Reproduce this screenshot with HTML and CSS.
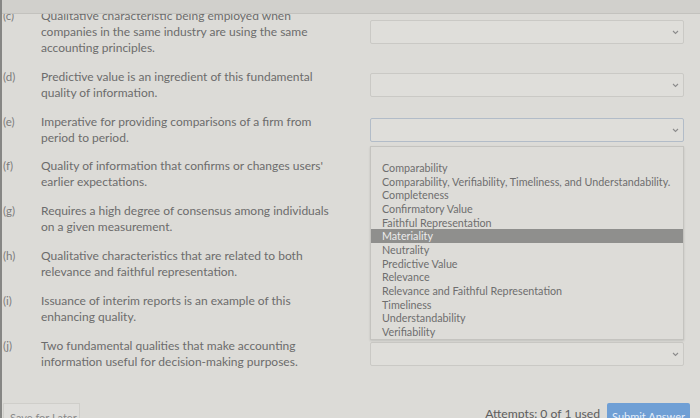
FILE: index.html
```html
<!DOCTYPE html>
<html>
<head>
<meta charset="utf-8">
<link rel="stylesheet" href="styles.css">
</head>
<body>
<div class="page">
  <div class="topbar"></div>
  <div class="questions">
    <div class="row">
      <div class="label">(c)</div>
      <div class="text">Qualitative characteristic being employed when<br>companies in the same industry are using the same<br>accounting principles.</div>
      <div class="select"><svg class="chev" width="7" height="5" viewBox="0 0 7 5"><polyline points="1,1 3.5,3.5 6,1" /></svg></div>
    </div>
    <div class="row">
      <div class="label">(d)</div>
      <div class="text">Predictive value is an ingredient of this fundamental<br>quality of information.</div>
      <div class="select"><svg class="chev" width="7" height="5" viewBox="0 0 7 5"><polyline points="1,1 3.5,3.5 6,1" /></svg></div>
    </div>
    <div class="row">
      <div class="label">(e)</div>
      <div class="text">Imperative for providing comparisons of a firm from<br>period to period.</div>
      <div class="select focused"><svg class="chev" width="7" height="5" viewBox="0 0 7 5"><polyline points="1,1 3.5,3.5 6,1" /></svg>
        <ul class="options">
          <li class="blank">&nbsp;</li>
          <li>Comparability</li>
          <li>Comparability, Verifiability, Timeliness, and Understandability.</li>
          <li>Completeness</li>
          <li>Confirmatory Value</li>
          <li>Faithful Representation</li>
          <li class="active">Materiality</li>
          <li>Neutrality</li>
          <li>Predictive Value</li>
          <li>Relevance</li>
          <li>Relevance and Faithful Representation</li>
          <li>Timeliness</li>
          <li>Understandability</li>
          <li>Verifiability</li>
        </ul>
      </div>
    </div>
    <div class="row">
      <div class="label">(f)</div>
      <div class="text">Quality of information that confirms or changes users'<br>earlier expectations.</div>
      <div class="select"></div>
    </div>
    <div class="row">
      <div class="label">(g)</div>
      <div class="text">Requires a high degree of consensus among individuals<br>on a given measurement.</div>
      <div class="select"></div>
    </div>
    <div class="row">
      <div class="label">(h)</div>
      <div class="text">Qualitative characteristics that are related to both<br>relevance and faithful representation.</div>
      <div class="select"></div>
    </div>
    <div class="row">
      <div class="label">(i)</div>
      <div class="text">Issuance of interim reports is an example of this<br>enhancing quality.</div>
      <div class="select"></div>
    </div>
    <div class="row">
      <div class="label">(j)</div>
      <div class="text">Two fundamental qualities that make accounting<br>information useful for decision-making purposes.</div>
      <div class="select"><svg class="chev" width="7" height="5" viewBox="0 0 7 5"><polyline points="1,1 3.5,3.5 6,1" /></svg></div>
    </div>
  </div>
  <div class="footer">
    <div class="save">Save for Later</div>
    <div class="actions">
      <span class="attempts">Attempts: 0 of 1 used</span>
      <span class="submit">Submit Answer</span>
    </div>
  </div>
</div>
</body>
</html>
```

FILE: styles.css
```css
html, body {
  margin: 0;
  padding: 0;
  width: 700px;
  height: 418px;
  overflow: hidden;
  background: #dcdbd7;
}

.page {
  position: relative;
  height: 418px;
  border-left: 2px solid #868684;
  padding-left: 1px;
  font-family: Lato, "Open Sans", sans-serif;
  color: #6c6c6c;
  overflow: hidden;
}

.topbar {
  position: absolute;
  top: 0;
  left: 0;
  right: 0;
  height: 13px;
  background: #d1d0cc;
  border-bottom: 1px solid #c3c2be;
  z-index: 3;
}

.questions {
  padding-top: 8px;
}

.row {
  display: grid;
  grid-template-columns: 38px 329px 314px;
  align-items: start;
  margin-bottom: 12.8px;
}

.label {
  font-size: 11.5px;
  line-height: 16px;
  color: #7c7c7c;
}

.text {
  font-size: 12px;
  line-height: 16px;
  white-space: nowrap;
}

.select {
  position: relative;
  align-self: center;
  height: 24px;
  box-sizing: border-box;
  border: 1px solid #cac9c5;
  border-radius: 2px;
  background: #dfdeda;
}

.select.focused {
  border-color: #b2bcc8;
}

.chev {
  position: absolute;
  right: 4px;
  top: 9px;
}

.chev polyline {
  fill: none;
  stroke: #8c8c8c;
  stroke-width: 1.1;
}

.options {
  position: absolute;
  top: 27px;
  left: -1px;
  width: 314px;
  margin: 0;
  padding: 0;
  list-style: none;
  box-sizing: border-box;
  border: 1px solid #c4c3bf;
  background: #dddcd8;
  box-shadow: 0 1px 2px rgba(0, 0, 0, 0.12);
  z-index: 2;
}

.options li {
  height: 13.7px;
  line-height: 13.7px;
  padding-left: 11px;
  font-size: 10.75px;
  color: #6e6e6e;
  white-space: nowrap;
}

.options li.blank {
  height: 14.3px;
}

.options li.active {
  background: #8f8f8d;
  color: #ececec;
}

.footer {
  display: flex;
  justify-content: space-between;
  align-items: flex-start;
  margin-top: 33px;
  padding-right: 10px;
}

.save {
  width: 77px;
  height: 30px;
  box-sizing: border-box;
  border: 1px solid #cfceca;
  background: #dfdedb;
  font-size: 11px;
  line-height: 28px;
  padding-left: 6px;
  color: #8a8a8a;
}

.actions {
  display: flex;
  align-items: flex-start;
  gap: 7px;
}

.attempts {
  font-size: 12.2px;
  line-height: 20px;
  padding-top: 1px;
  color: #5e5e5e;
}

.submit {
  display: block;
  width: 83px;
  height: 26px;
  box-sizing: border-box;
  background: #6f9fd5;
  color: #e4edf8;
  font-size: 11px;
  line-height: 24px;
  padding-top: 2px;
  text-align: center;
  border-radius: 2px;
}
```
